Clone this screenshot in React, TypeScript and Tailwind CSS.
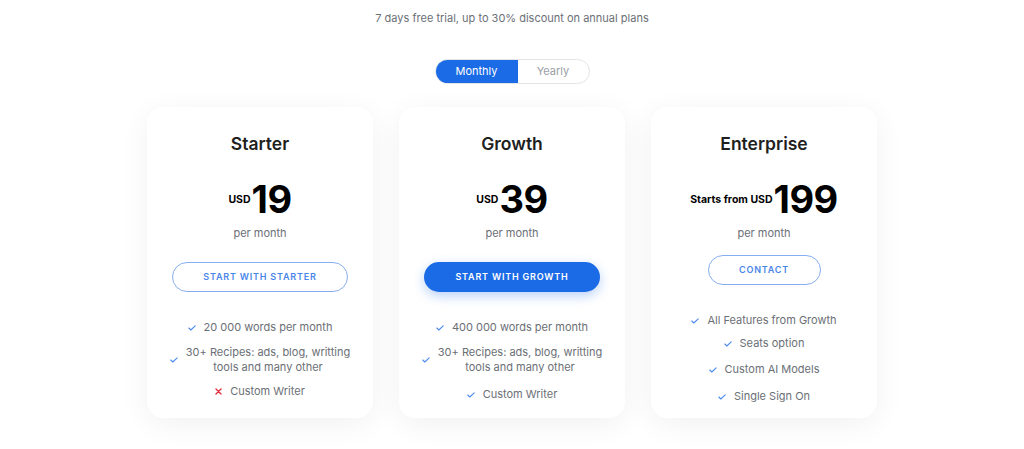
import { Fragment } from "react";

type Feature = { text: string; lines?: string[]; ok: boolean; mt: string };

type Plan = {
  name: string;
  prefix: string;
  price: string;
  cta: string;
  primary: boolean;
  ctaClass: string;
  listClass: string;
  features: Feature[];
};

const plans: Plan[] = [
  {
    name: "Starter",
    prefix: "USD",
    price: "19",
    cta: "START WITH STARTER",
    primary: false,
    ctaClass: "mt-[19px] w-[176px]",
    listClass: "mt-[28px]",
    features: [
      { text: "20 000 words per month", ok: true, mt: "mt-0" },
      {
        text: "",
        lines: ["30+ Recipes: ads, blog, writting", "tools and many other"],
        ok: true,
        mt: "mt-[10px]",
      },
      { text: "Custom Writer", ok: false, mt: "mt-[9px]" },
    ],
  },
  {
    name: "Growth",
    prefix: "USD",
    price: "39",
    cta: "START WITH GROWTH",
    primary: true,
    ctaClass: "mt-[19px] w-[176px]",
    listClass: "mt-[28px]",
    features: [
      { text: "400 000 words per month", ok: true, mt: "mt-0" },
      {
        text: "",
        lines: ["30+ Recipes: ads, blog, writting", "tools and many other"],
        ok: true,
        mt: "mt-[10px]",
      },
      { text: "Custom Writer", ok: true, mt: "mt-[12px]" },
    ],
  },
  {
    name: "Enterprise",
    prefix: "Starts from USD",
    price: "199",
    cta: "CONTACT",
    primary: false,
    ctaClass: "mt-[12px] w-[113px]",
    listClass: "mt-[28px]",
    features: [
      { text: "All Features from Growth", ok: true, mt: "mt-0" },
      { text: "Seats option", ok: true, mt: "mt-[8px]" },
      { text: "Custom AI Models", ok: true, mt: "mt-[11px]" },
      { text: "Single Sign On", ok: true, mt: "mt-[12px]" },
    ],
  },
];

function Check() {
  return (
    <svg width="8" height="6" viewBox="0 0 8 6" fill="none" className="shrink-0">
      <path d="M0.8 3 L2.8 5 L7.2 0.8" stroke="#4c8bf0" strokeWidth="1.1" strokeLinecap="round" strokeLinejoin="round" />
    </svg>
  );
}

function Cross() {
  return (
    <svg width="7" height="7" viewBox="0 0 7 7" fill="none" className="shrink-0">
      <path d="M1 1 L6 6 M6 1 L1 6" stroke="#e0323c" strokeWidth="1.4" strokeLinecap="round" />
    </svg>
  );
}

function PlanCard({ plan }: { plan: Plan }) {
  return (
    <article className="flex h-[311px] w-[226px] flex-col items-center rounded-2xl bg-white pt-[23px] shadow-[0_6px_30px_rgba(0,0,0,0.06)]">
      <h3 className="text-[17.5px] leading-7 font-semibold text-[#1f1f1f]">{plan.name}</h3>
      <div className="mt-[19px] flex items-start text-black">
        <span className="mt-[18px] mr-[1px] text-[10.5px] leading-none font-bold">{plan.prefix}</span>
        <span className="text-[38px] leading-[44px] font-bold tracking-[-0.5px]">{plan.price}</span>
      </div>
      <p className="mt-[2px] text-[11px] leading-5 text-[#6b6f76]">per month</p>
      <button
        className={
          plan.primary
            ? `${plan.ctaClass} h-[30px] rounded-full bg-[#1b6ae6] text-[9px] font-semibold tracking-[0.8px] text-white shadow-[0_4px_12px_rgba(27,106,230,0.3)]`
            : `${plan.ctaClass} h-[30px] rounded-full border border-[#86adf0] bg-white text-[9px] font-semibold tracking-[0.8px] text-[#4a86e8]`
        }
      >
        {plan.cta}
      </button>
      <ul className={`${plan.listClass} flex flex-col items-center px-3`}>
        {plan.features.map((f, i) => (
          <li key={i} className={`${f.mt} flex items-center gap-[8px] text-[11px] leading-[15px] text-[#6b6f76]`}>
            {f.ok ? <Check /> : <Cross />}
            <span className="text-center">
              {f.lines
                ? f.lines.map((l, j) => (
                    <Fragment key={j}>
                      {j > 0 && <br />}
                      {l}
                    </Fragment>
                  ))
                : f.text}
            </span>
          </li>
        ))}
      </ul>
    </article>
  );
}

export default function App() {
  return (
    <div className="h-[449px] w-full overflow-hidden bg-white font-['Inter',sans-serif]">
      <p className="pt-[8px] text-center text-[11px] leading-5 text-[#6b6f76]">
        7 days free trial, up to 30% discount on annual plans
      </p>
      <div className="mt-[31px] flex justify-center">
        <div className="flex h-[25px] w-[155px] overflow-hidden rounded-full border border-[#e2e4e8] text-[11px]">
          <span className="flex w-[82px] items-center justify-center bg-[#1b6ae6] text-white">Monthly</span>
          <span className="flex flex-1 items-center justify-center text-[#9a9ea6]">Yearly</span>
        </div>
      </div>
      <div className="mt-[23px] flex justify-center gap-[26px]">
        {plans.map((p) => (
          <PlanCard key={p.name} plan={p} />
        ))}
      </div>
    </div>
  );
}
